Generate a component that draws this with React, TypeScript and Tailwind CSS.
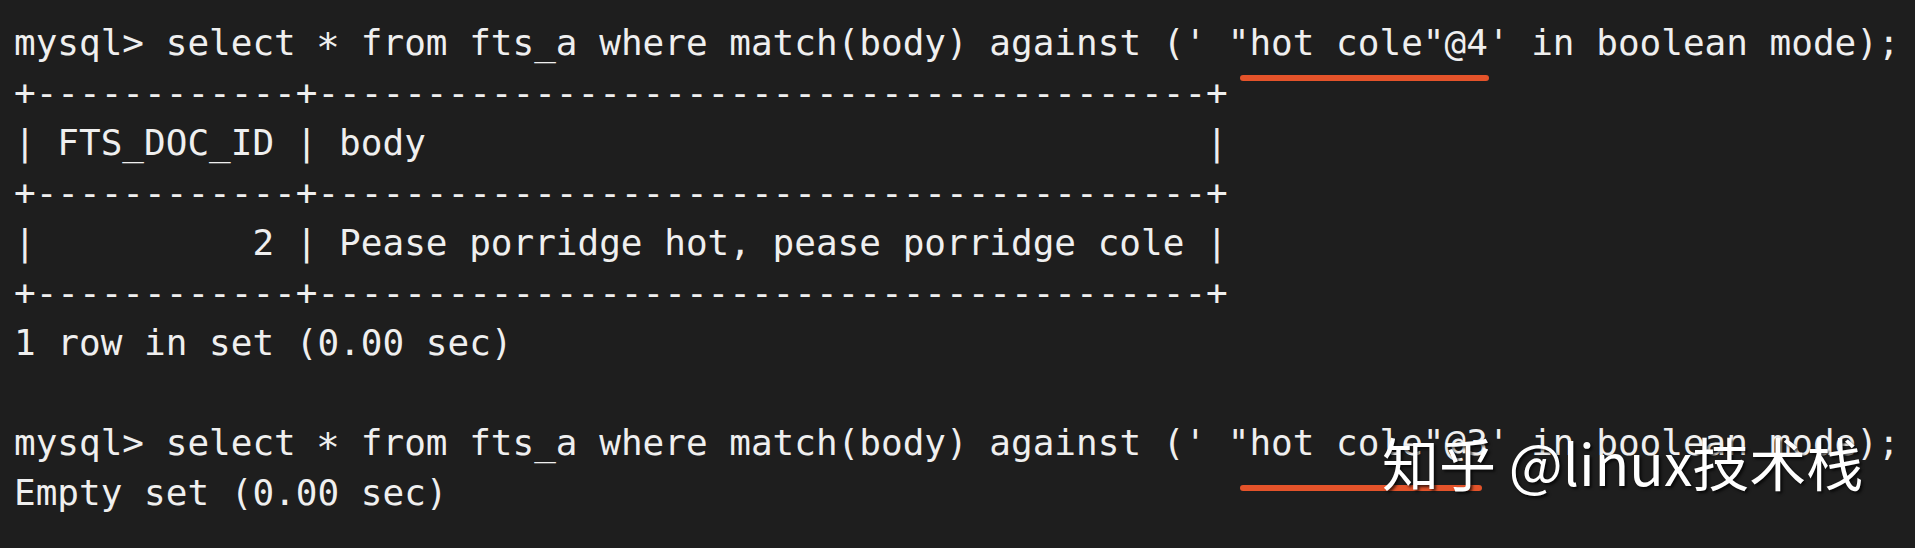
import React from "react";

const lines: string[] = [
  `mysql> select * from fts_a where match(body) against (' "hot cole"@4' in boolean mode);`,
  `+------------+-----------------------------------------+`,
  `| FTS_DOC_ID | body                                    |`,
  `+------------+-----------------------------------------+`,
  `|          2 | Pease porridge hot, pease porridge cole |`,
  `+------------+-----------------------------------------+`,
  `1 row in set (0.00 sec)`,
  ``,
  `mysql> select * from fts_a where match(body) against (' "hot cole"@3' in boolean mode);`,
  `Empty set (0.00 sec)`,
];

function Line({ text }: { text: string }) {
  const idx = text.indexOf(" * ");
  if (text.startsWith("mysql>") && idx >= 0) {
    return (
      <div className="h-[50px]">
        {text.slice(0, idx + 1)}
        <span className="inline-block translate-y-[5px] scale-110">*</span>
        {text.slice(idx + 2)}
      </div>
    );
  }
  return <div className="h-[50px]">{text}</div>;
}

export default function App() {
  return (
    <div className="relative w-[1915px] h-[548px] overflow-hidden bg-[#1e1e1e]">
      <div className="pt-[18px] pl-[14px] font-['DejaVu_Sans_Mono',monospace] text-[36px] leading-[50px] text-[#efefef] whitespace-pre">
        {lines.map((l, i) => (
          <Line key={i} text={l} />
        ))}
      </div>
      <div className="absolute left-[1240px] top-[75px] w-[249px] h-[6px] rounded-full bg-[#e4532a]" />
      <div className="absolute left-[1240px] top-[485px] w-[242px] h-[6px] rounded-full bg-[#e4532a]" />
      <div className="absolute left-[1382px] top-[433px] font-['Noto_Sans_CJK_SC',sans-serif] text-[57px] leading-none text-white whitespace-pre [text-shadow:2px_2px_3px_rgba(0,0,0,0.75)]">
        知乎 @linux技术栈
      </div>
    </div>
  );
}
